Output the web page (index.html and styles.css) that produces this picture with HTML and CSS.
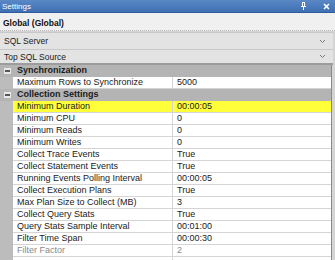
FILE: index.html
```
<!DOCTYPE html>
<html lang="en">
<head>
    <meta charset="UTF-8">
    <title>Settings</title>
    <link rel="stylesheet" href="styles.css">
</head>
<body>
    <div class="titlebar">
        <span class="title">Settings</span>
        <span class="title-icons">
            <svg width="7" height="8" viewBox="0 0 7 8"><path d="M2 0h3v4h1v1H4v3H3V5H1V4h1z" fill="#fff"/><rect x="3" y="1" width="1" height="3" fill="#4f7fc0"/></svg>
            <svg width="7" height="7" viewBox="0 0 7 7"><path d="M1 1l5 5M6 1L1 6" stroke="#fff" stroke-width="1.6"/></svg>
        </span>
    </div>

    <div class="scope">Global (Global)</div>

    <div class="combo">
        <span>SQL Server</span>
        <svg width="7" height="5" viewBox="0 0 7 5"><path d="M1 1l2.5 2.5L6 1" stroke="#777" fill="none"/></svg>
    </div>
    <div class="combo last">
        <span>Top SQL Source</span>
        <svg width="7" height="5" viewBox="0 0 7 5"><path d="M1 1l2.5 2.5L6 1" stroke="#777" fill="none"/></svg>
    </div>

    <div class="grid">
        <div class="row category">
            <div class="margin"><span class="toggle"></span></div>
            <div class="cat-name">Synchronization</div>
        </div>
        <div class="row">
            <div class="margin"></div>
            <div class="name">Maximum Rows to Synchronize</div>
            <div class="value">5000</div>
        </div>

        <div class="row category">
            <div class="margin"><span class="toggle"></span></div>
            <div class="cat-name">Collection Settings</div>
        </div>
        <div class="row selected">
            <div class="margin"></div>
            <div class="name">Minimum Duration</div>
            <div class="value">00:00:05</div>
        </div>
        <div class="row">
            <div class="margin"></div>
            <div class="name">Minimum CPU</div>
            <div class="value">0</div>
        </div>
        <div class="row">
            <div class="margin"></div>
            <div class="name">Minimum Reads</div>
            <div class="value">0</div>
        </div>
        <div class="row">
            <div class="margin"></div>
            <div class="name">Minimum Writes</div>
            <div class="value">0</div>
        </div>
        <div class="row">
            <div class="margin"></div>
            <div class="name">Collect Trace Events</div>
            <div class="value">True</div>
        </div>
        <div class="row">
            <div class="margin"></div>
            <div class="name">Collect Statement Events</div>
            <div class="value">True</div>
        </div>
        <div class="row">
            <div class="margin"></div>
            <div class="name">Running Events Polling Interval</div>
            <div class="value">00:00:05</div>
        </div>
        <div class="row">
            <div class="margin"></div>
            <div class="name">Collect Execution Plans</div>
            <div class="value">True</div>
        </div>
        <div class="row">
            <div class="margin"></div>
            <div class="name">Max Plan Size to Collect (MB)</div>
            <div class="value">3</div>
        </div>
        <div class="row">
            <div class="margin"></div>
            <div class="name">Collect Query Stats</div>
            <div class="value">True</div>
        </div>
        <div class="row">
            <div class="margin"></div>
            <div class="name">Query Stats Sample Interval</div>
            <div class="value">00:01:00</div>
        </div>
        <div class="row">
            <div class="margin"></div>
            <div class="name">Filter Time Span</div>
            <div class="value">00:00:30</div>
        </div>
        <div class="row disabled">
            <div class="margin"></div>
            <div class="name">Filter Factor</div>
            <div class="value">2</div>
        </div>
        <div class="row">
            <div class="margin"></div>
            <div class="name"></div>
            <div class="value"></div>
        </div>
    </div>
</body>
</html>
```

FILE: styles.css
```
body {
    margin: 0;
    padding: 0;
    width: 335px;
    height: 260px;
    overflow: hidden;
    background-color: #d4d4d4;
    font-family: "Liberation Sans", Arial, sans-serif;
    color: #1a1a1a;
}
.titlebar {
    height: 13px;
    background: linear-gradient(#5a88c6, #3f70b3);
    border-bottom: 1px solid #2f5d9c;
    display: flex;
    align-items: center;
    justify-content: space-between;
    padding: 0 5px 0 2px;
    box-sizing: border-box;
}
.title {
    color: white;
    font-size: 8px;
}
.title-icons {
    display: flex;
    gap: 16px;
    align-items: center;
}
.title-icons svg {
    display: block;
}
.scope {
    height: 18px;
    background-color: #f0f0f0;
    border-bottom: 1px dotted #b8b8b8;
    box-sizing: border-box;
    padding: 5px 0 0 3px;
    font-size: 8.5px;
    font-weight: bold;
    color: #111;
}
.combo {
    margin-top: 1px;
    height: 17px;
    background-color: #e3e3e3;
    border-top: 1px solid #c8c8c8;
    box-sizing: border-box;
    display: flex;
    align-items: center;
    justify-content: space-between;
    padding: 0 7px 0 4px;
    font-size: 8.5px;
    width: 333px;
}
.combo.last {
    margin-top: 0;
    height: 16px;
    border-bottom: 2px solid #9c9c9c;
}
.grid {
    width: 332px;
    background-color: white;
    border-right: 1px solid #8a8a8a;
    box-sizing: border-box;
}
.row {
    display: flex;
    height: 12px;
    font-size: 9px;
    line-height: 11px;
}
.margin {
    width: 13px;
    flex: none;
    background-color: #bcbcbc;
    position: relative;
}
.name {
    width: 160px;
    flex: none;
    padding-left: 4px;
    border-bottom: 1px solid #d4d4d4;
    border-right: 1px solid #d4d4d4;
    box-sizing: border-box;
    white-space: nowrap;
    overflow: hidden;
}
.value {
    flex: 1;
    padding-left: 4px;
    border-bottom: 1px solid #d4d4d4;
}
.category {
    background-color: #b4b4b4;
}
.category .margin {
    background-color: #b4b4b4;
}
.cat-name {
    padding-left: 4px;
    font-weight: bold;
}
.toggle {
    position: absolute;
    left: 4px;
    top: 3px;
    width: 7px;
    height: 6px;
    background-color: #e8e8e8;
}
.toggle::after {
    content: "";
    position: absolute;
    left: 1px;
    top: 2px;
    width: 5px;
    height: 2px;
    background-color: #555;
}
.selected .name,
.selected .value {
    background-color: #ffff3a;
}
.disabled {
    color: #8a8a8a;
}
```
